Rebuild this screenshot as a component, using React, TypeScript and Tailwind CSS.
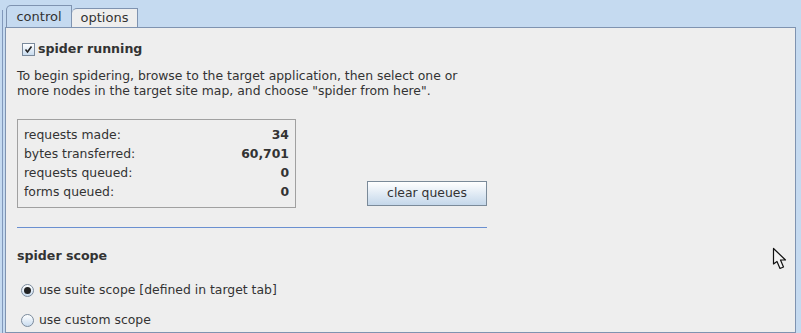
import React from 'react';

// статистика паука
const stats = [
  {label: 'requests made:', value: '34'},
  {label: 'bytes transferred:', value: '60,701'},
  {label: 'requests queued:', value: '0'},
  {label: 'forms queued:', value: '0'},
];

function CheckBox({checked}: {checked: boolean}) {
  return (
    <span className="flex h-[13px] w-[13px] items-center justify-center border border-[#7a8a9c] bg-gradient-to-b from-white to-[#c9dcef]">
      {checked && (
        <svg width="9" height="9" viewBox="0 0 9 9">
          <path d="M1.5 4.5 L3.5 7 L7.5 1.5" fill="none" stroke="#222" strokeWidth="1.6" />
        </svg>
      )}
    </span>
  );
}

function Radio({checked, label}: {checked: boolean; label: string}) {
  return (
    <div className="flex items-center gap-[5px] pl-[4px]">
      <span className="flex h-[13px] w-[13px] items-center justify-center rounded-full border border-[#7a8a9c] bg-gradient-to-b from-white to-[#c9dcef]">
        {checked && <span className="h-[7px] w-[7px] rounded-full bg-[#222]" />}
      </span>
      <span>{label}</span>
    </div>
  );
}

function Pointer() {
  return (
    <svg className="absolute left-[772px] top-[247px]" width="18" height="26" viewBox="0 0 18 26">
      <path
        d="M1.5 1.5 L1.5 17 L5 14.5 L8 21.5 L11.5 20 L8.5 13 L13.5 13 Z"
        fill="#f4f4f4"
        stroke="#111"
        strokeWidth="1.2"
        strokeLinejoin="round"
      />
    </svg>
  );
}

export default function App() {
  return (
    <div
      className="relative flex h-[333px] w-[801px] flex-col overflow-hidden bg-[#c5daf0] text-[12.4px] text-[#333]"
      style={{fontFamily: '"DejaVu Sans", sans-serif'}}
    >
      {/* левая рамка */}
      <div className="absolute left-[2px] top-[10px] h-full w-[1px] bg-[#8198bb]" />

      {/* вкладки */}
      <div className="ml-[6px] mt-[5px] flex h-[22px] items-end">
        <div className="flex h-[22px] w-[66px] items-center justify-center rounded-tl-[5px] border border-b-0 border-[#7f93b0] bg-[#c5daf0] text-[13px] text-[#333]">
          control
        </div>
        <div className="flex h-[19px] w-[66px] items-center justify-center rounded-tl-[5px] border border-b-0 border-l-0 border-[#7f93b0] bg-[#eeeeee] text-[13px] text-[#333]">
          options
        </div>
      </div>

      {/* панель */}
      <div className="ml-[5px] mr-[5px] flex-1 border border-[#7f93b0] bg-[#eeeeee] pl-[11px] pt-[12px]">
        <div className="flex items-center gap-[3px] pl-[5px]">
          <CheckBox checked />
          <span className="text-[12.6px] font-bold">spider running</span>
        </div>

        <p className="mt-[9px] leading-[15px]">
          To begin spidering, browse to the target application, then select one or
          <br />
          more nodes in the target site map, and choose "spider from here".
        </p>

        <div className="mt-[21px] flex items-end">
          <div className="flex h-[89px] w-[279px] flex-col justify-center border border-[#a0a0a0] px-[6px]">
            {stats.map(s => (
              <div key={s.label} className="flex h-[19px] items-center justify-between">
                <span>{s.label}</span>
                <span className="font-bold">{s.value}</span>
              </div>
            ))}
          </div>
          <button className="mb-[2px] ml-[71px] h-[25px] w-[120px] border border-[#7a8a99] bg-gradient-to-b from-white to-[#c4d7ea] text-[12.4px] text-[#333]">
            clear queues
          </button>
        </div>

        <div className="mt-[19px] h-[1px] w-[470px] bg-[#6a8fd0]" />

        <div className="mt-[19px] text-[12.6px] font-bold">spider scope</div>

        <div className="mt-[15px] flex flex-col gap-[12px]">
          <Radio checked label="use suite scope [defined in target tab]" />
          <Radio checked={false} label="use custom scope" />
        </div>
      </div>

      <Pointer />
    </div>
  );
}
